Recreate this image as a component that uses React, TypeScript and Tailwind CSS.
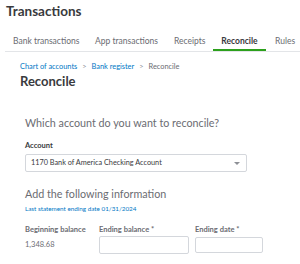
const tabs = [
  { label: "Bank transactions", w: "w-[82px]" },
  { label: "App transactions", w: "w-[79px]" },
  { label: "Receipts", w: "w-[47px]" },
  { label: "Reconcile", w: "w-[54px]" },
  { label: "Rules", w: "w-[30px]" },
];

export default function App() {
  return (
    <div className="h-[264px] w-[300px] overflow-hidden bg-white font-['Lato',sans-serif] text-[#393a3d]">
      <h1 className="pl-[6px] pt-[2px] text-[13.5px] font-bold leading-[18px]">Transactions</h1>

      <div className="ml-[5px] mt-[15px] flex border-b border-[#e3e5e8]">
        {tabs.map((t) => (
          <div key={t.label} className={`${t.w} shrink-0 whitespace-nowrap`}>
            <div
              className={
                t.label === "Reconcile"
                  ? "w-[53px] border-b-2 border-[#2ca01c] pb-[2px] text-center text-[8.5px] font-bold leading-[12px] text-[#393a3d]"
                  : "pb-[4px] pl-[8px] text-[8.5px] leading-[12px] text-[#6b6c72]"
              }
            >
              {t.label}
            </div>
          </div>
        ))}
      </div>

      <div className="pl-[20px] pt-[9px]">
        <div className="flex gap-[5px] whitespace-nowrap text-[7.4px] leading-[11px]">
          <span className="text-[#0077c5]">Chart of accounts</span>
          <span className="text-[#8d9096]">&gt;</span>
          <span className="text-[#0077c5]">Bank register</span>
          <span className="text-[#8d9096]">&gt;</span>
          <span className="text-[#6b6c72]">Reconcile</span>
        </div>
        <h2 className="mt-[1px] text-[13px] font-bold leading-[17px]">Reconcile</h2>
      </div>

      <div className="pl-[25px] pt-[25px]">
        <div className="whitespace-nowrap text-[10.75px] leading-[16px] text-[#6b6c72]">Which account do you want to reconcile?</div>
        <div className="mt-[10px] text-[7.5px] font-bold leading-[10px] text-[#393a3d]">Account</div>
        <div className="mt-[3px] flex h-[18px] w-[222px] items-center justify-between rounded-[2px] border border-[#d4d7dc] pl-[5px] pr-[6px]">
          <span className="whitespace-nowrap text-[7.3px] leading-[10px] text-[#393a3d]">1170 Bank of America Checking Account</span>
          <span className="h-0 w-0 border-x-[3px] border-t-[3px] border-x-transparent border-t-[#8d9096]" />
        </div>

        <div className="mt-[14px] whitespace-nowrap text-[10.75px] leading-[16px] text-[#6b6c72]">Add the following information</div>
        <div className="mt-[1.5px] whitespace-nowrap text-[6.3px] leading-[9px] text-[#0077c5]">Last statement ending date 01/31/2024</div>

        <div className="mt-[12.5px] flex">
          <div className="w-[74px]">
            <div className="whitespace-nowrap text-[7.5px] font-bold leading-[10px] text-[#6b6c72]">Beginning balance</div>
            <div className="mt-[5px] text-[7.5px] leading-[10px] text-[#6b6c72]">1,348.68</div>
          </div>
          <div className="w-[96px]">
            <div className="whitespace-nowrap text-[7.5px] font-bold leading-[10px] text-[#6b6c72]">Ending balance *</div>
            <div className="mt-[1px] h-[18px] w-[90px] rounded-[2px] border border-[#d4d7dc]" />
          </div>
          <div>
            <div className="whitespace-nowrap text-[7.5px] font-bold leading-[10px] text-[#6b6c72]">Ending date *</div>
            <div className="mt-[2px] h-[16px] w-[68px] rounded-[2px] border border-[#d4d7dc]" />
          </div>
        </div>
      </div>
    </div>
  );
}
